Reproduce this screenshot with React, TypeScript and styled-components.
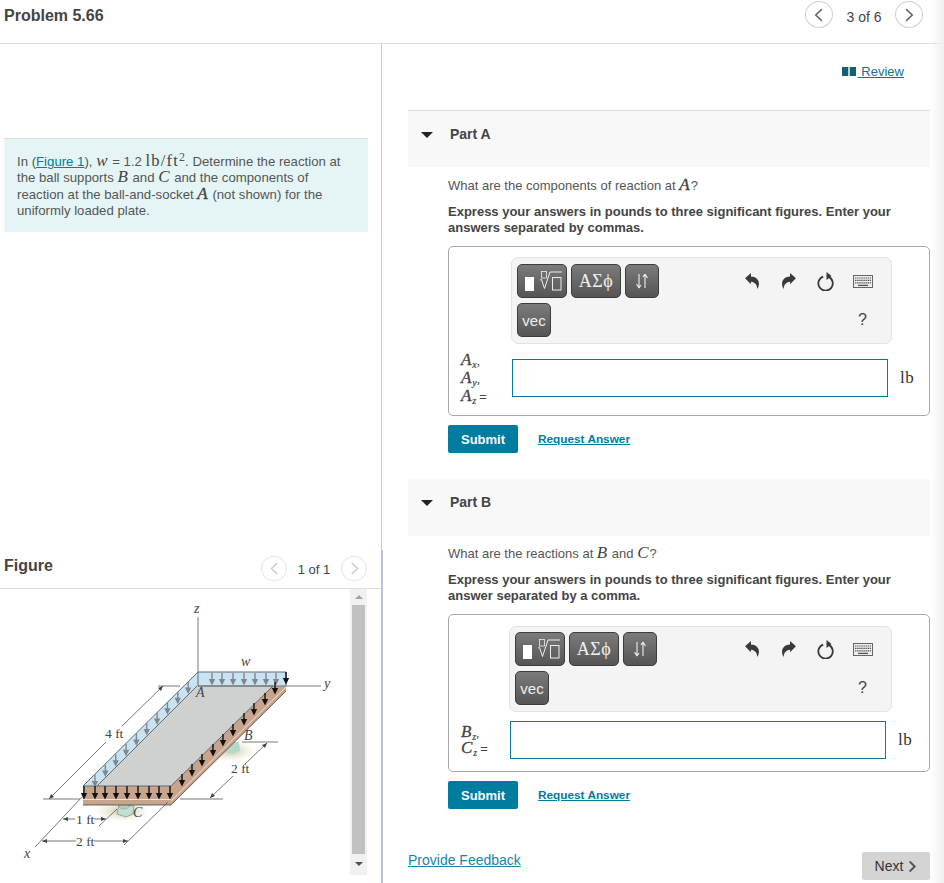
import React from "react";
import styled, { createGlobalStyle } from "styled-components";
import { FaChevronRight } from "react-icons/fa";

const Global = createGlobalStyle`
  html, body { margin: 0; padding: 0; background: #fff; }
  body { font-family: "Liberation Sans", Arial, sans-serif; color: #444; }
  * { box-sizing: border-box; }
`;

const Page = styled.div`
  position: relative;
  width: 944px;
  height: 883px;
  overflow: hidden;
  display: flex;
  flex-direction: column;
  &::after {
    content: "";
    position: absolute;
    top: 0;
    right: 0;
    bottom: 0;
    width: 14px;
    background: linear-gradient(to right, rgba(240,240,240,0), rgba(240,240,240,1));
  }
`;
const Header = styled.header`
  height: 44px;
  flex: none;
  border-bottom: 1px solid #ddd;
  display: flex;
  justify-content: space-between;
  padding: 1px 21px 0 4px;
`;
const Title = styled.h1`
  margin: 5px 0 0;
  font-size: 16px;
  line-height: 20px;
  font-weight: 700;
  color: #444;
`;
const Pager = styled.div<{ $gap: number; $fs: number }>`
  display: flex;
  align-items: flex-start;
  gap: ${(p) => p.$gap}px;
  font-size: ${(p) => p.$fs}px;
  color: #444;
`;
const PagerText = styled.span<{ $h: number }>`
  line-height: ${(p) => p.$h}px;
  min-width: 36px;
  text-align: center;
`;
const Circle = styled.span<{ $size: number; $off?: boolean }>`
  width: ${(p) => p.$size}px;
  height: ${(p) => p.$size - 1}px;
  border-radius: 50%;
  border: 1px solid ${(p) => (p.$off ? "#e4e4e4" : "#cfcfcf")};
  display: flex;
  align-items: center;
  justify-content: center;
  background: #fff;
  color: ${(p) => (p.$off ? "#c8c8c8" : "#666")};
`;
const Body = styled.div`
  flex: 1;
  display: flex;
  min-height: 0;
`;
const Left = styled.aside`
  width: 383px;
  flex: none;
  display: flex;
  flex-direction: column;
`;
const LeftTop = styled.section`
  height: 506px;
  flex: none;
  width: 382px;
  border-right: 1px solid #c5ccd4;
  padding: 94px 13px 0 4px;
`;
const Problem = styled.div`
  height: 94px;
  background: #e5f5f5;
  border-top: 1px solid #d9dfdf;
  padding: 15px 24px 0 13px;
  font-size: 13.2px;
  line-height: 16.4px;
  color: #555;
`;
const Link = styled.a`
  color: #007c9e;
  text-decoration: underline;
`;
const M = styled.span<{ $strong?: boolean }>`
  font-family: "Liberation Serif", "DejaVu Serif", serif;
  font-style: italic;
  font-size: 17px;
  -webkit-text-stroke: ${(p) => (p.$strong ? "0.4px" : "0")} #444;
  letter-spacing: 1px;
  color: #444;
  line-height: 0;
`;
const U = styled.span`
  font-family: "Liberation Serif", "DejaVu Serif", serif;
  font-size: 16.5px;
  letter-spacing: 1.2px;
  color: #444;
  line-height: 0;
`;
const Sup = styled.sup`
  font-family: "Liberation Serif", serif;
  font-size: 12px;
  line-height: 0;
`;
const LeftBottom = styled.section`
  flex: 1;
  min-height: 0;
  border-right: 2px solid #b4c7de;
  display: flex;
  flex-direction: column;
`;
const FigureHead = styled.div`
  height: 39px;
  flex: none;
  border-bottom: 1px solid #ddd;
  padding: 6px 14px 0 4px;
  display: flex;
  justify-content: space-between;
`;
const FigureTitle = styled.h2`
  margin: 0;
  font-size: 16px;
  line-height: 20px;
  font-weight: 700;
  color: #444;
`;
const FigureBody = styled.div`
  flex: 1;
  min-height: 0;
  display: flex;
  padding-right: 14px;
`;
const Drawing = styled.svg`
  width: 350px;
  height: 294px;
  flex: none;
  display: block;
`;
const Track = styled.div`
  width: 17px;
  flex: none;
  height: 286px;
  background: #f1f1f1;
  display: flex;
  flex-direction: column;
  align-items: center;
  padding-top: 6px;
`;
const Arrow = styled.span<{ $down?: boolean }>`
  width: 0;
  height: 0;
  flex: none;
  border-left: 4px solid transparent;
  border-right: 4px solid transparent;
  ${(p) =>
    p.$down ? "border-top: 4px solid #505050;" : "border-bottom: 4px solid #a3a3a3;"}
`;
const Thumb = styled.div`
  width: 13px;
  height: 249px;
  margin: 6px 0 8px;
  background: #c1c1c1;
  flex: none;
`;
const Right = styled.main`
  flex: 1;
  min-width: 0;
  padding: 0 14px 0 25px;
  display: flex;
  flex-direction: column;
`;
const ReviewRow = styled.div`
  height: 66px;
  flex: none;
  display: flex;
  justify-content: flex-end;
  padding: 19px 26px 0 0;
`;
const ReviewLink = styled.a`
  display: flex;
  align-items: center;
  height: 16px;
  font-size: 13px;
  color: #1b6f85;
  text-decoration: underline;
`;
const BookSvg = styled.svg`
  margin-right: 2px;
`;
const PartHead = styled.div<{ $line?: boolean; $top: number }>`
  height: 57px;
  flex: none;
  background: #f8f8f8;
  border-top: 1px solid ${(p) => (p.$line ? "#dedede" : "#f8f8f8")};
  display: flex;
  align-items: flex-start;
  padding: ${(p) => p.$top}px 0 0 13px;
  gap: 17px;
`;
const Caret = styled.span`
  width: 0;
  height: 0;
  margin-top: 6px;
  border-left: 6px solid transparent;
  border-right: 6px solid transparent;
  border-top: 6px solid #222;
`;
const PartName = styled.h3`
  margin: 0;
  font-size: 14px;
  line-height: 17px;
  font-weight: 700;
  color: #444;
`;
const PartBody = styled.div<{ $h: number; $pad: number }>`
  height: ${(p) => p.$h}px;
  flex: none;
  padding: ${(p) => p.$pad}px 0 0 40px;
`;
const Question = styled.p`
  margin: 0 0 10px;
  font-size: 13px;
  line-height: 17px;
  color: #555;
`;
const Instruction = styled.p`
  margin: 0 0 10px;
  width: 470px;
  font-size: 13px;
  line-height: 16px;
  font-weight: 700;
  color: #444;
`;
const AnswerBox = styled.div<{ $h: number; $pad: number }>`
  height: ${(p) => p.$h}px;
  border: 1px solid #a8a8a8;
  border-radius: 5px;
  padding: ${(p) => p.$pad}px 0 0;
  background: #fff;
`;
const ToolRow = styled.div<{ $indent: number }>`
  display: flex;
  flex-direction: column;
  align-items: stretch;
  margin-left: ${(p) => p.$indent}px;
  margin-right: 37px;
`;
const Toolbar = styled.div<{ $h: number; $pad: number }>`
  height: ${(p) => p.$h}px;
  background: #f4f4f4;
  border: 1px solid #e2e2e2;
  border-radius: 7px;
  padding: ${(p) => p.$pad}px 5px 0;
  display: grid;
  grid-template-columns: 1fr auto;
`;
const ToolLeft = styled.div`
  display: flex;
  flex-direction: column;
  row-gap: 5px;
`;
const ToolGroup = styled.div`
  display: flex;
  column-gap: 4px;
`;
const ToolButton = styled.span<{ $w: number }>`
  width: ${(p) => p.$w}px;
  height: 34px;
  border: 1px solid #3c3c3c;
  border-radius: 5px;
  background: linear-gradient(#7b7b7b, #555);
  color: #f0f0f0;
  display: flex;
  align-items: center;
  justify-content: center;
`;
const GreekLabel = styled.span`
  font-family: "Liberation Serif", serif;
  font-size: 18px;
  letter-spacing: 0.5px;
`;
const VecLabel = styled.span`
  font-size: 15px;
`;
const ToolRight = styled.div`
  display: grid;
  grid-template-columns: 37px 37px 37px 37px;
  grid-template-rows: 34px 34px;
  row-gap: 5px;
  justify-items: center;
  align-items: center;
  color: #3a3a3a;
  padding-right: 5px;
`;
const Help = styled.span`
  grid-column: 4;
  font-size: 16px;
  color: #444;
`;
const InputRow = styled.div<{ $top: number }>`
  display: flex;
  align-items: center;
  margin-top: ${(p) => p.$top}px;
`;
const Label = styled.div<{ $w: number; $lh: number }>`
  width: ${(p) => p.$w}px;
  height: 38px;
  flex: none;
  padding-left: 12px;
  display: flex;
  flex-direction: column;
  justify-content: center;
  font-family: "Liberation Serif", serif;
  font-size: 13px;
  line-height: ${(p) => p.$lh}px;
  color: #444;
`;
const LabelLine = styled.div`
  flex: none;
  white-space: nowrap;
`;
const Var = styled.i`
  font-size: 17px;
  letter-spacing: 0.8px;
  -webkit-text-stroke: 0.3px #444;
`;
const Sub = styled.i`
  font-size: 10px;
  vertical-align: -3px;
  line-height: 0;
  -webkit-text-stroke: 0.2px #444;
`;
const Eq = styled.span`
  font-family: "Liberation Sans", sans-serif;
  font-size: 13px;
`;
const Input = styled.div<{ $w: number }>`
  width: ${(p) => p.$w}px;
  height: 38px;
  flex: none;
  border: 1px solid #0b7a99;
  background: #fff;
`;
const Unit = styled.span`
  margin-left: 12px;
  font-family: "Liberation Serif", serif;
  font-size: 17px;
  letter-spacing: 0.5px;
  color: #333;
`;
const Actions = styled.div`
  display: flex;
  align-items: center;
  gap: 20px;
  margin-top: 9px;
`;
const Submit = styled.span`
  width: 70px;
  height: 28px;
  border-radius: 2px;
  background: #007c9e;
  color: #fff;
  font-size: 13px;
  font-weight: 700;
  display: flex;
  align-items: center;
  justify-content: center;
`;
const RequestLink = styled.a`
  font-size: 11.8px;
  font-weight: 700;
  color: #007c9e;
  text-decoration: underline;
`;
const Footer = styled.div`
  flex: 1;
  display: flex;
  justify-content: space-between;
  align-items: flex-start;
  padding-top: 8px;
`;
const Feedback = styled.a`
  font-size: 14px;
  line-height: 16px;
  color: #1786a6;
  text-decoration: underline;
`;
const Next = styled.span`
  width: 68px;
  height: 28px;
  border-radius: 2px;
  background: #d4d4d4;
  color: #333;
  font-size: 14px;
  display: flex;
  align-items: center;
  justify-content: center;
  gap: 3px;
  padding-left: 2px;
  svg {
    color: #555;
  }
`;

const Chevron = ({ dir, size }: { dir: "l" | "r"; size: number }) => (
  <svg width={size} height={size} viewBox="0 0 12 12" fill="none">
    <path
      d={dir === "l" ? "M8.5 1 L3.2 6 L8.5 11" : "M3.5 1 L8.8 6 L3.5 11"}
      stroke="currentColor"
      strokeWidth="1.3"
    />
  </svg>
);

const BookIcon = () => (
  <BookSvg width="14" height="11" viewBox="0 0 14 11">
    <path d="M0 1h6.3v9H0zM7.7 1H14v9H7.7z" fill="#145f74" />
  </BookSvg>
);

const RootIcon = () => (
  <svg width="46" height="30" viewBox="0 0 46 30" fill="none">
    <rect x="6" y="11" width="9" height="14" fill="#fff" />
    <rect x="22.5" y="5.5" width="5" height="6.5" stroke="#eee" strokeWidth="0.8" />
    <path d="M21 14l1.5 -0.5 3 9 5.5 -16.5H43" stroke="#eee" strokeWidth="1" />
    <rect x="33.5" y="11.5" width="8.5" height="12.5" stroke="#eee" strokeWidth="1" />
  </svg>
);

const SwapIcon = () => (
  <svg width="16" height="18" viewBox="0 0 16 18" fill="none" stroke="#eee" strokeWidth="1.1">
    <path d="M5 2v14M5 16l-2.5 -4M5 16l2 -3M11 16V2M11 2l2.5 4M11 2l-2 3" />
  </svg>
);

const UndoIcon = ({ flip }: { flip?: boolean }) => (
  <svg width="14" height="16" viewBox="0 0 13 15">
    <path
      transform={flip ? "matrix(-1 0 0 1 13 0)" : undefined}
      d="M0 5L5.5 0V3.2C10 3.4 13 6 13 10C13 12 12.3 13.8 11.6 15C11.2 11.5 9.5 8.4 5.5 8.2V10.5z"
      fill="#3a3a3a"
    />
  </svg>
);

const ResetIcon = () => (
  <svg width="18" height="19" viewBox="0 0 18 19" fill="none">
    <path d="M11.2 4.7a7.2 7.2 0 1 1 -5 -0.1" stroke="#3a3a3a" strokeWidth="1.8" />
    <path d="M9.5 0 L14.5 4 L9.5 8z" fill="#3a3a3a" />
  </svg>
);

const KeyboardIcon = () => (
  <svg width="20" height="13" viewBox="0 0 20 13">
    <rect x="0.5" y="0.5" width="19" height="12" fill="#eee" stroke="#666" />
    <path
      d="M2 3h16M2 5.4h16M2 7.8h16"
      stroke="#555"
      strokeWidth="1.2"
      strokeDasharray="1.4 0.7"
    />
    <path d="M5 10.4h10" stroke="#555" strokeWidth="1.3" />
  </svg>
);

const Tools = ({ h, pad }: { h: number; pad: number }) => (
  <Toolbar $h={h} $pad={pad}>
    <ToolLeft>
      <ToolGroup>
        <ToolButton $w={50}>
          <RootIcon />
        </ToolButton>
        <ToolButton $w={50}>
          <GreekLabel>ΑΣϕ</GreekLabel>
        </ToolButton>
        <ToolButton $w={34}>
          <SwapIcon />
        </ToolButton>
      </ToolGroup>
      <ToolGroup>
        <ToolButton $w={34}>
          <VecLabel>vec</VecLabel>
        </ToolButton>
      </ToolGroup>
    </ToolLeft>
    <ToolRight>
      <UndoIcon />
      <UndoIcon flip />
      <ResetIcon />
      <KeyboardIcon />
      <Help>?</Help>
    </ToolRight>
  </Toolbar>
);

const arrow = (x: number, y: number, len: number, color: string, key: string) => (
  <g key={key}>
    <line x1={x} y1={y - len} x2={x} y2={y - 4} stroke={color} strokeWidth="1.4" />
    <path d={`M${x - 3.2} ${y - 6}L${x + 3.2} ${y - 6}L${x} ${y + 0.5}z`} fill={color} />
  </g>
);

const Ft = styled.text`
  font-family: "Liberation Serif", serif;
  font-size: 13.5px;
  fill: #444;
`;
const Lt = styled.text`
  font-family: "Liberation Serif", serif;
  font-style: italic;
  font-size: 14px;
  fill: #444;
`;

const Diagram = () => {
  const frontX = [84, 95, 105, 116, 127, 138, 149, 159, 170];
  const backX = [212, 222, 233, 244, 255, 266, 276];
  const leftN = [0, 1, 2, 3, 4, 5, 6, 7, 8, 9];
  const rightA: [number, number][] = [
    [182, 787], [192, 777], [202, 767], [213, 757], [223, 747], [233, 737], [244, 726], [254, 716], [265, 706], [275, 695], [286, 685],
  ];
  return (
    <Drawing viewBox="0 590 350 294">
      <defs>
        <radialGradient id="shadow">
          <stop offset="0%" stopColor="#b9b78a" stopOpacity="0.75" />
          <stop offset="100%" stopColor="#d9d8b8" stopOpacity="0" />
        </radialGradient>
      </defs>
      <ellipse cx="122" cy="812" rx="28" ry="11" fill="url(#shadow)" />
      <ellipse cx="230" cy="752" rx="26" ry="11" fill="url(#shadow)" />
      <path d="M119 806l-2 9 9 3 7 -3 1 -8z" fill="#c4dfd2" stroke="#6f8f80" strokeWidth="0.7" />
      <ellipse cx="124" cy="807" rx="5" ry="3" fill="#b8cabf" stroke="#7f9488" strokeWidth="0.5" />
      <path d="M226 753l7 2 7 -3 -1 -9 -6 0z" fill="#b5d8c8" />

      <path d="M198 673H286V687H273L171 787H97L83 787z" fill="#c9e3f2" />
      <path d="M197 687H273L171 787H97z" fill="#cfd1d1" />
      <path d="M83 787H171V806H83z" fill="#c9a48d" />
      <path d="M83 800.5H171" stroke="#efe3d6" strokeWidth="1" />
      <path d="M286 687V692L171 806V787L273 687z" fill="#c9a48d" />
      <path d="M171 802L286 688" stroke="#efe3d6" strokeWidth="1" />

      <path d="M198 673H286V687M83 787L198 673M198 673V687H273M97 787L197 687M83 787H171L273 687" fill="none" stroke="#5e6a72" strokeWidth="1" />
      <path d="M83 806H171L286 692" fill="none" stroke="#444" strokeWidth="0.8" />
      <path d="M198 618V673M198 687H321" stroke="#777" strokeWidth="1" fill="none" />

      {backX.map((x) => arrow(x, 686, 12, "#80878c", `b${x}`))}
      {leftN.map((n) =>
        arrow(95 + n * 10.35, 788 - n * 10.4, 12, "#80878c", `l${n}`)
      )}
      {frontX.map((x) => arrow(x, 800, 13, "#111", `f${x}`))}
      {rightA.map(([x, y]) => arrow(x, y, 12, "#111", `r${x}`))}

      <g stroke="#555" strokeWidth="0.8" fill="none">
        <path d="M35 848L83 797" />
        <path d="M43 800H80M49 800L106 743M122 727L163 687M158 687H180" />
        <path d="M99 827L117 810M124 846L168 803" />
        <path d="M63 820H75M94 820H106" />
        <path d="M42 842H76M94 842H128" />
        <path d="M210 799L233 777M245 765L267 744M242 743H278M190 800H223M180 800H190" />
      </g>
      <g fill="#444">
        <path d="M49 800l2 -5 3 3z" />
        <path d="M163 687l-5 2 3 3z" />
        <path d="M63 820l5 -2v4z" />
        <path d="M106 820l-5 -2v4z" />
        <path d="M42 842l5 -2v4z" />
        <path d="M128 842l-5 -2v4z" />
        <path d="M210 799l2 -5 3 3z" />
        <path d="M267 744l-5 2 3 3z" />
      </g>
      <Ft x="105" y="739">4 ft</Ft>
      <Ft x="76" y="825">1 ft</Ft>
      <Ft x="76" y="847">2 ft</Ft>
      <Ft x="231" y="774">2 ft</Ft>
      <Lt x="194" y="614">z</Lt>
      <Lt x="324" y="689">y</Lt>
      <Lt x="241" y="667">w</Lt>
      <Lt x="196" y="698">A</Lt>
      <Lt x="244" y="741">B</Lt>
      <Lt x="133" y="818">C</Lt>
      <Lt x="24" y="859">x</Lt>
    </Drawing>
  );
};

export default function App() {
  return (
    <Page>
      <Global />
      <Header>
        <Title>Problem 5.66</Title>
        <Pager $gap={13} $fs={14}>
          <Circle $size={28}>
            <Chevron dir="l" size={14} />
          </Circle>
          <PagerText $h={33}>3 of 6</PagerText>
          <Circle $size={28}>
            <Chevron dir="r" size={14} />
          </Circle>
        </Pager>
      </Header>
      <Body>
        <Left>
          <LeftTop>
            <Problem>
              In (<Link>Figure 1</Link>), <M>w</M> = 1.2 <U>lb/ft</U>
              <Sup>2</Sup>. Determine the reaction at the ball supports <M>B</M> and <M>C</M> and
              the components of reaction at the ball-and-socket <M $strong>A</M> (not shown) for
              the uniformly loaded plate.
            </Problem>
          </LeftTop>
          <LeftBottom>
            <FigureHead>
              <FigureTitle>Figure</FigureTitle>
              <Pager $gap={9} $fs={13}>
                <Circle $size={26} $off>
                  <Chevron dir="l" size={13} />
                </Circle>
                <PagerText $h={27}>1 of 1</PagerText>
                <Circle $size={26} $off>
                  <Chevron dir="r" size={13} />
                </Circle>
              </Pager>
            </FigureHead>
            <FigureBody>
              <Diagram />
              <Track>
                <Arrow />
                <Thumb />
                <Arrow $down />
              </Track>
            </FigureBody>
          </LeftBottom>
        </Left>
        <Right>
          <ReviewRow>
            <ReviewLink>
              <BookIcon />
              &nbsp;Review
            </ReviewLink>
          </ReviewRow>
          <PartHead $line $top={15}>
            <Caret />
            <PartName>Part A</PartName>
          </PartHead>
          <PartBody $h={312} $pad={10}>
            <Question>
              What are the components of reaction at <M $strong>A</M>?
            </Question>
            <Instruction>
              Express your answers in pounds to three significant figures. Enter your answers
              separated by commas.
            </Instruction>
            <AnswerBox $h={170} $pad={10}>
              <ToolRow $indent={62}>
                <Tools h={87} pad={6} />
              </ToolRow>
              <InputRow $top={15}>
                <Label $w={63} $lh={17}>
                  <LabelLine>
                    <Var>A</Var>
                    <Sub>x</Sub>,
                  </LabelLine>
                  <LabelLine>
                    <Var>A</Var>
                    <Sub>y</Sub>,
                  </LabelLine>
                  <LabelLine>
                    <Var>A</Var>
                    <Sub>z</Sub> <Eq>=</Eq>
                  </LabelLine>
                </Label>
                <Input $w={376} />
                <Unit>lb</Unit>
              </InputRow>
            </AnswerBox>
            <Actions>
              <Submit>Submit</Submit>
              <RequestLink>Request Answer</RequestLink>
            </Actions>
          </PartBody>
          <PartHead $top={14}>
            <Caret />
            <PartName>Part B</PartName>
          </PartHead>
          <PartBody $h={308} $pad={9}>
            <Question>
              What are the reactions at <M>B</M> and <M>C</M>?
            </Question>
            <Instruction>
              Express your answers in pounds to three significant figures. Enter your answer
              separated by a comma.
            </Instruction>
            <AnswerBox $h={158} $pad={11}>
              <ToolRow $indent={60}>
                <Tools h={86} pad={5} />
              </ToolRow>
              <InputRow $top={9}>
                <Label $w={61} $lh={15}>
                  <LabelLine>
                    <Var>B</Var>
                    <Sub>z</Sub>,
                  </LabelLine>
                  <LabelLine>
                    <Var>C</Var>
                    <Sub>z</Sub> <Eq>=</Eq>
                  </LabelLine>
                </Label>
                <Input $w={376} />
                <Unit>lb</Unit>
              </InputRow>
            </AnswerBox>
            <Actions>
              <Submit>Submit</Submit>
              <RequestLink>Request Answer</RequestLink>
            </Actions>
          </PartBody>
          <Footer>
            <Feedback>Provide Feedback</Feedback>
            <Next>
              Next <FaChevronRight size={13} />
            </Next>
          </Footer>
        </Right>
      </Body>
    </Page>
  );
}
